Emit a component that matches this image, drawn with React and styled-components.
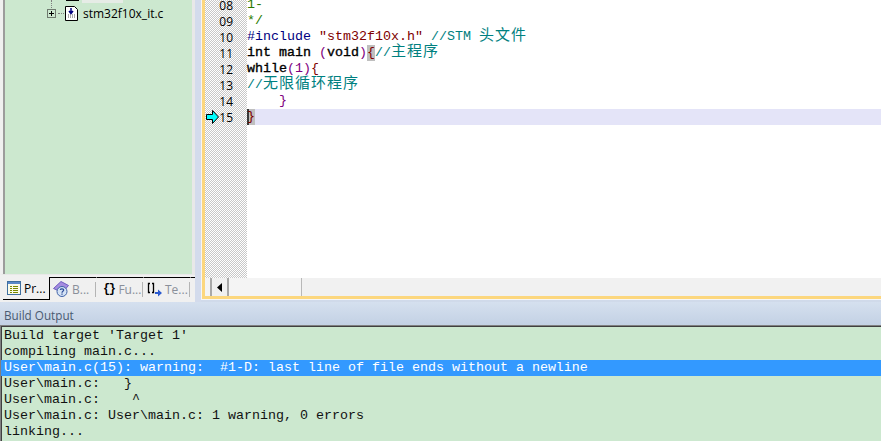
import React from "react";
import styled, { createGlobalStyle } from "styled-components";

const GlobalStyle = createGlobalStyle`
  html, body {
    margin: 0;
    padding: 0;
    background: #d0daea;
    overflow: hidden;
  }
`;

const Page = styled.div`
  width: 881px;
  height: 441px;
  display: flex;
  flex-direction: column;
  overflow: hidden;
`;

const TopArea = styled.div`
  height: 302px;
  display: flex;
`;

const ProjectPane = styled.aside`
  width: 195px;
  display: flex;
  flex-direction: column;
  background: #f0f0f0;
`;

const TreeFrame = styled.div`
  height: 275px;
  padding-left: 1px;
  border-left: 3px solid #f0f0f0;
  border-right: 3px solid #e8e8e8;
  border-bottom: 1px solid #e8e8e8;
  box-sizing: border-box;
`;

const TreeSurface = styled.div`
  height: 100%;
  border-left: 2px solid #9c9c9c;
  margin-left: -1px;
  background: #cce8cf;
  overflow: hidden;
`;

const TreeStub = styled.div`
  height: 5px;
  display: flex;
  margin-left: 46px;
`;

const StubLine = styled.span`
  width: 1px;
  height: 8px;
  border-left: 1px dotted #808080;
`;

const StubIcon = styled.span`
  width: 13px;
  height: 1px;
  margin-left: 13px;
  background: #000;
`;

const StubSelection = styled.span`
  width: 41px;
  height: 3px;
  margin-left: 3px;
  background: #e6ece6;
`;

const TreeRow = styled.div`
  display: flex;
  align-items: center;
  height: 16px;
  margin-left: 42px;
  color: #000;
`;

const Expander = styled.span`
  width: 9px;
  height: 9px;
  box-sizing: border-box;
  border: 1px solid #6f7a6f;
  position: relative;
  &::before {
    content: "";
    position: absolute;
    left: 1px;
    top: 3px;
    width: 5px;
    height: 1px;
    background: #000;
  }
  &::after {
    content: "";
    position: absolute;
    left: 3px;
    top: 1px;
    width: 1px;
    height: 5px;
    background: #000;
  }
`;

const Connector = styled.span`
  width: 6px;
  margin: 0 1px 0 2px;
  border-top: 1px dotted #808080;
`;

const FileName = styled.span`
  margin-left: 5px;
  font: 12px "Open Sans", "Liberation Sans", sans-serif;
`;

const TabBar = styled.div`
  flex: 1;
  display: flex;
  align-items: flex-start;
  padding-top: 2px;
  padding-left: 3px;
`;

const Tab = styled.div`
  width: ${(props) => props.$width}px;
  height: 23px;
  box-sizing: border-box;
  display: flex;
  align-items: center;
  gap: ${(props) => props.$gap}px;
  padding-left: ${(props) => props.$pad}px;
  font: 12px "Open Sans", "Liberation Sans", sans-serif;
  color: ${(props) => (props.$active ? "#000" : "#8a8f9a")};
  border-top: ${(props) => (props.$active ? "0" : "1px solid #000")};
  border-right: 1px solid ${(props) => (props.$active ? "#000" : "transparent")};
  border-bottom: ${(props) => (props.$active ? "1px solid #000" : "0")};
  position: relative;
  &::after {
    content: "";
    display: ${(props) => (props.$divider ? "block" : "none")};
    position: absolute;
    right: 0;
    top: 4px;
    height: 15px;
    width: 1px;
    background: #b4b4b4;
  }
`;

const TabFiller = styled.div`
  flex: 1;
  height: 23px;
  box-sizing: border-box;
  border-top: 1px solid #000;
`;

const Braces = styled.span`
  font: bold 12px "Liberation Mono", monospace;
  color: #000;
  letter-spacing: -1.5px;
`;

const Splitter = styled.div`
  width: 6px;
  background: #d3dbec;
`;

const EditorFrame = styled.section`
  flex: 1;
  height: 300px;
  box-sizing: border-box;
  border-left: 1px solid #f6f6f6;
  border-bottom: 1px solid #f6f6f6;
`;

const EditorInner = styled.div`
  height: 100%;
  box-sizing: border-box;
  display: flex;
  flex-direction: column;
  border-left: 3px solid #fcd77e;
  border-bottom: 3px solid #fcd77e;
  background: #fff;
`;

const CodeView = styled.div`
  height: 278px;
  overflow: hidden;
  display: flex;
  flex-direction: column;
`;

const CodeScroll = styled.div`
  margin-top: -3px;
  flex: 1;
  display: flex;
  flex-direction: column;
  background: linear-gradient(#fff, #fff) 42px 0 / 100% 100% no-repeat,
    repeating-conic-gradient(#c8c8c8 0 25%, #fff 0 50%) 0 0 / 2px 2px;
`;

const CodeLine = styled.div`
  height: 16px;
  display: flex;
  align-items: center;
  background: linear-gradient(to right, transparent 42px, ${(props) => (props.$current ? "#e4e4f8" : "transparent")} 42px);
`;

const Gutter = styled.div`
  width: 42px;
  flex: none;
  display: flex;
  align-items: center;
  position: relative;
  justify-content: flex-end;
  padding-right: 14px;
  box-sizing: border-box;
  font: 12px "Open Sans", "Liberation Sans", sans-serif;
  color: #000;
`;

const ArrowMark = styled.svg`
  position: absolute;
  left: 1px;
  top: 1px;
`;

const CodeText = styled.pre`
  margin: 0;
  height: 16px;
  font: 13.33px/16px "Liberation Mono", "Noto Sans CJK SC", monospace;
  white-space: pre;
  color: #000;
`;

const Token = styled.span`
  color: ${(props) => props.$color};
  -webkit-text-stroke: ${(props) => (props.$heavy ? "0.35px" : "0")};
`;

const Cjk = styled.span`
  font: 15px/0 "Noto Sans CJK SC", sans-serif;
  letter-spacing: 1px;
`;

const BraceMatch = styled.span`
  background: #bfbfbf;
  display: inline-block;
  height: 16px;
`;

const Caret = styled.span`
  display: inline-block;
  width: 8px;
  height: 16px;
  box-sizing: border-box;
  background: #bfbfbf;
  border-left: 2px solid #3a3a3a;
  text-indent: -2px;
`;

const ScrollBar = styled.div`
  height: 18px;
  display: flex;
  background: #f1f1f1;
`;

const ScrollGrip = styled.div`
  width: 7px;
  box-sizing: border-box;
  border-right: 2px solid #a8a8a8;
  background: #f4f4f4;
`;

const ScrollButton = styled.div`
  width: 17px;
  display: flex;
  align-items: center;
  justify-content: center;
  border-right: 2px solid #a8a8a8;
  background: #f0f0f0;
  box-sizing: border-box;
`;

const ScrollThumb = styled.div`
  width: 73px;
  border-right: 1px solid #b8b8b8;
  background: #f4f4f4;
  box-sizing: border-box;
`;

const OutputHeader = styled.header`
  height: 23px;
  box-sizing: border-box;
  display: flex;
  align-items: center;
  padding: 2px 0 0 4px;
  background: linear-gradient(#d5e0ef, #c3d1e4);
  font: 11.7px "Open Sans", "Liberation Sans", sans-serif;
  color: #4a5a70;
`;

const OutputBody = styled.div`
  flex: 1;
  padding-top: 2px;
  background: #cce8cf;
  border-top: 1px solid #808080;
  border-left: 1px solid #808080;
  box-shadow: inset 1px 1px 0 #404040;
`;

const OutputLine = styled.div`
  height: 16px;
  padding-left: 3px;
  font: 13.33px/16px "Liberation Mono", monospace;
  white-space: pre;
  color: ${(props) => (props.$selected ? "#fff" : "#111")};
  background: ${(props) => (props.$selected ? "#3399ff" : "transparent")};
`;

const codeLines = [
  { no: "08", body: <Token $color="#2a7a00">1-</Token> },
  { no: "09", body: <Token $color="#2a7a00">*/</Token> },
  {
    no: "10",
    body: (
      <>
        <Token $color="#000080">#include</Token> <Token $color="#800000">"stm32f10x.h"</Token>{" "}
        <Token $color="#008080">//STM <Cjk>头文件</Cjk></Token>
      </>
    ),
  },
  {
    no: "11",
    body: (
      <>
        <Token $heavy>int main</Token> <Token $color="#800080">(</Token><Token $heavy>void</Token>
        <Token $color="#800080">)</Token><BraceMatch><Token $color="#800000">{"{"}</Token></BraceMatch>
        <Token $color="#008080">//<Cjk>主程序</Cjk></Token>
      </>
    ),
  },
  {
    no: "12",
    body: (
      <>
        <Token $heavy>while</Token><Token $color="#800080">(1)</Token><Token $color="#800000">{"{"}</Token>
      </>
    ),
  },
  { no: "13", body: <Token $color="#008080">//<Cjk>无限循环程序</Cjk></Token> },
  { no: "14", body: <Token $color="#800080">{"    }"}</Token> },
  { no: "15", current: true, body: <Caret><Token $color="#800000">{"}"}</Token></Caret> },
];

const outputLines = [
  "Build target 'Target 1'",
  "compiling main.c...",
  "User\\main.c(15): warning:  #1-D: last line of file ends without a newline",
  "User\\main.c:   }",
  "User\\main.c:    ^",
  "User\\main.c: User\\main.c: 1 warning, 0 errors",
  "linking...",
];

function ProjectIcon() {
  return (
    <svg width="14" height="14" viewBox="0 0 14 14">
      <rect x="0.5" y="0.5" width="13" height="13" fill="#fbfbe8" stroke="#3f6f9f" />
      <rect x="1" y="1" width="12" height="2" fill="#5a88c8" />
      <path d="M3 5.5h2M3 7.5h2M3 9.5h2M3 11.5h2M6 5.5h5M6 7.5h5M6 9.5h5M6 11.5h5" stroke="#7a8a00" />
    </svg>
  );
}

function BooksIcon() {
  return (
    <svg width="16" height="16" viewBox="0 0 16 16">
      <path d="M0.5 7.5L8 0.5l7.5 4-6 7z" fill="#a58ce0" stroke="#6f5cc0" />
      <circle cx="9" cy="10.5" r="5" fill="#d4e2f4" stroke="#3f62a8" />
      <path d="M7.2 8.8c.4-1.4 3.5-1.4 3.5.3 0 1.2-1.7 1.2-1.7 2.6M9 12.6v1.2" fill="none" stroke="#2a4a98" strokeWidth="1.2" />
    </svg>
  );
}

function TemplateIcon() {
  return (
    <svg width="16" height="15" viewBox="0 0 16 15">
      <path d="M3 1.5H1.5v9H3M5 1.5h1.5v9H5" fill="none" stroke="#000" strokeWidth="1.3" />
      <path d="M8 10h3V7.5l4 3.5-4 3.5V12H8z" fill="#2a5ad0" />
    </svg>
  );
}

export default function App() {
  return (
    <Page>
      <GlobalStyle />
      <TopArea>
        <ProjectPane>
          <TreeFrame>
            <TreeSurface>
              <TreeStub>
                <StubLine />
                <StubIcon />
                <StubSelection />
              </TreeStub>
              <TreeRow>
                <Expander />
                <Connector />
                <svg width="13" height="15" viewBox="0 0 13 15">
                  <path d="M0.5 0.5h9l3 3v11h-12z" fill="#fff" stroke="#000" />
                  <path d="M6 2v5M4 5l2 2.5L8 5" fill="none" stroke="#000080" strokeWidth="1.5" />
                  <path d="M3 9h7M3 11h7" stroke="#555" strokeDasharray="1 1" />
                </svg>
                <FileName>stm32f10x_it.c</FileName>
              </TreeRow>
            </TreeSurface>
          </TreeFrame>
          <TabBar>
            <Tab $width={47} $pad={4} $gap={3} $active>
              <ProjectIcon />
              Pr...
            </Tab>
            <Tab $width={47} $pad={3} $gap={3} $divider>
              <BooksIcon />
              B...
            </Tab>
            <Tab $width={47} $pad={6} $gap={4} $divider>
              <Braces>{"{}"}</Braces>
              Fu...
            </Tab>
            <Tab $width={47} $pad={3} $gap={2} $divider>
              <TemplateIcon />
              Te...
            </Tab>
            <TabFiller />
          </TabBar>
        </ProjectPane>
        <Splitter />
        <EditorFrame>
          <EditorInner>
            <CodeView>
              <CodeScroll>
                {codeLines.map((line) => (
                  <CodeLine key={line.no} $current={line.current}>
                    <Gutter>
                      {line.current && (
                        <ArrowMark width="13" height="14" viewBox="0 0 13 14">
                          <path d="M0.5 4.5h6v-4l6 6.5-6 6.5v-4h-6z" fill="#00ffff" stroke="#000" />
                        </ArrowMark>
                      )}
                      {line.no}
                    </Gutter>
                    <CodeText>{line.body}</CodeText>
                  </CodeLine>
                ))}
              </CodeScroll>
            </CodeView>
            <ScrollBar>
              <ScrollGrip />
              <ScrollButton>
                <svg width="5" height="9" viewBox="0 0 5 9">
                  <path d="M5 0v9L0 4.5z" fill="#000" />
                </svg>
              </ScrollButton>
              <ScrollThumb />
            </ScrollBar>
          </EditorInner>
        </EditorFrame>
      </TopArea>
      <OutputHeader>Build Output</OutputHeader>
      <OutputBody>
        {outputLines.map((line, index) => (
          <OutputLine key={line} $selected={index === 2}>
            {line}
          </OutputLine>
        ))}
      </OutputBody>
    </Page>
  );
}
